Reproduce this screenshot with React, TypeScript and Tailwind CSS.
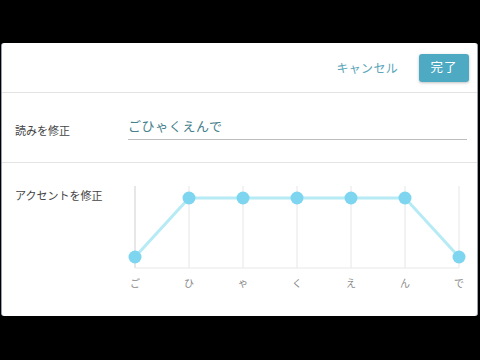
import React from "react";

const kana = ["ご", "ひ", "ゃ", "く", "え", "ん", "で"];
const accent = [0, 1, 1, 1, 1, 1, 0];

function AccentChart() {
  const xs = kana.map((_, i) => 14 + i * 54);
  const ys = accent.map((a) => (a ? 19 : 78));
  const pts = xs.map((x, i) => `${x},${ys[i]}`).join(" ");
  return (
    <svg width="350" height="115" viewBox="0 0 350 115" className="block">
      {xs.map((x, i) => (
        <line
          key={x}
          x1={x}
          y1={7}
          x2={x}
          y2={89}
          stroke={i === 0 ? "#cfcfcf" : "#e6e6e6"}
          strokeWidth={1}
        />
      ))}
      <line x1={14} y1={89} x2={338} y2={89} stroke="#e8e8e8" strokeWidth={1} />
      <polyline points={pts} fill="none" stroke="#b6ebf5" strokeWidth={3} />
      {xs.map((x, i) => (
        <circle key={x} cx={x} cy={ys[i]} r={6.5} fill="#7dd5ef" />
      ))}
      {xs.map((x, i) => (
        <text
          key={x}
          x={x}
          y={108}
          textAnchor="middle"
          fontSize="10"
          fill="#8a8a8a"
          fontFamily="'Noto Sans CJK JP', sans-serif"
        >
          {kana[i]}
        </text>
      ))}
    </svg>
  );
}

export default function App() {
  return (
    <div className="w-[480px] h-[360px] bg-black pt-[43px] font-['Noto_Sans_CJK_JP',sans-serif]">
      <div className="ml-px w-[477px] h-[273px] bg-white rounded-[3px] border-x border-gray-400 flex flex-col overflow-hidden">
        <header className="h-[50px] shrink-0 flex items-center justify-end border-b border-[#e4e4e4] pr-[8px]">
          <button className="text-[12px] text-[#5aa5b9] tracking-[0.3px] mr-[21px]">
            キャンセル
          </button>
          <button className="w-[50px] h-[28px] rounded-[3px] bg-[#4eaac2] text-white text-[12.5px] tracking-[1px] shadow-[0_1px_3px_rgba(0,0,0,0.25)]">
            完了
          </button>
        </header>

        <div className="h-[70px] shrink-0 flex border-b border-[#e4e4e4]">
          <div className="w-[126px] pl-[13px] pt-[29px] text-[11px] text-[#444]">読みを修正</div>
          <div className="pt-[24px]">
            <div className="w-[339px] h-[23px] border-b border-[#bdbdbd] text-[13px] text-[#45808c] tracking-[0.6px] leading-[18px]">
              ごひゃくえんで
            </div>
          </div>
        </div>

        <div className="flex flex-1">
          <div className="w-[119px] pl-[13px] pt-[24px] text-[11px] text-[#444]">アクセントを修正</div>
          <div className="pt-[16px]">
            <AccentChart />
          </div>
        </div>
      </div>
    </div>
  );
}
